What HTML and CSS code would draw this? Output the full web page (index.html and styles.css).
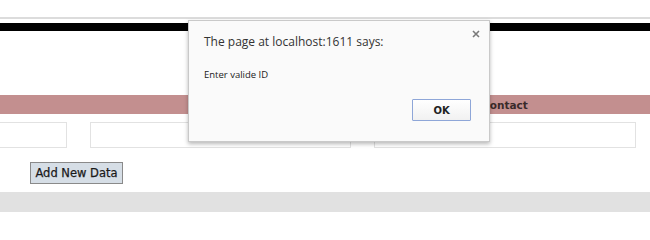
FILE: index.html
```html
<!DOCTYPE html>
<html>
<head>
<meta charset="utf-8">
<link rel="stylesheet" href="styles.css">
</head>
<body>
<div class="page">
  <div class="topline"></div>
  <div class="blackbar"></div>
  <div class="spacer"></div>
  <div class="band">
    <div class="hcell"></div>
    <div class="hcell"></div>
    <div class="hcell">Contact</div>
  </div>
  <div class="inputs">
    <input class="field first" type="text">
    <input class="field" type="text">
    <input class="field" type="text">
  </div>
  <div class="actions">
    <button class="addbtn">Add New Data</button>
  </div>
  <div class="footer"></div>
</div>

<div class="dialog">
  <div class="dlg-title">The page at localhost:1611 says:</div>
  <svg class="dlg-close" width="8" height="8" viewBox="0 0 8 8"><path d="M1 1L7 7M7 1L1 7" stroke="#7a7a7a" stroke-width="1.6"/></svg>
  <div class="dlg-msg">Enter valide ID</div>
  <div class="dlg-actions">
    <button class="okbtn">OK</button>
  </div>
</div>
</body>
</html>
```
FILE: styles.css
```css
html, body {
  margin: 0;
  padding: 0;
  background: #ffffff;
  width: 650px;
  height: 212px;
  overflow: hidden;
}
.page {
  display: flex;
  flex-direction: column;
}
.topline {
  margin-top: 17px;
  height: 2px;
  background: #dcdcdc;
}
.blackbar {
  margin-top: 4px;
  height: 8px;
  background: #000;
}
.spacer {
  height: 64px;
}
.band {
  height: 19px;
  background: #c38f8f;
  display: grid;
  grid-template-columns: 67px 261px 262px;
  column-gap: 23px;
  align-items: center;
}
.hcell {
  font-family: "DejaVu Sans", Verdana, sans-serif;
  font-weight: bold;
  font-size: 10.5px;
  color: #3a2a2a;
  text-align: center;
}
.inputs {
  margin-top: 8px;
  display: grid;
  grid-template-columns: 67px 261px 262px;
  column-gap: 23px;
}
.field {
  box-sizing: border-box;
  height: 26px;
  margin: 0;
  border: 1px solid #e2e2e2;
  background: #fff;
  padding: 0;
}
.field.first {
  border-left: none;
}
.actions {
  padding: 14px 0 8px 30px;
  display: flex;
}
.addbtn {
  box-sizing: border-box;
  width: 93px;
  height: 22px;
  margin: 0;
  padding: 0;
  border: 1px solid #8a8a8a;
  background: #d6dee6;
  font-family: "DejaVu Sans", Verdana, sans-serif;
  font-size: 11.5px;
  color: #1a1a1a;
  -webkit-text-stroke: 0.25px #1a1a1a;
}
.footer {
  height: 20px;
  background: #e1e1e1;
}
.dialog {
  position: absolute;
  left: 188px;
  top: 20px;
  width: 302px;
  height: 122px;
  box-sizing: border-box;
  background: #fafafa;
  border: 1px solid #c9c9c9;
  box-shadow: 0 2px 4px rgba(0,0,0,0.28);
  padding: 12px 18px 0 15px;
  font-family: "Open Sans", "Noto Sans", sans-serif;
}
.dlg-title {
  font-size: 12px;
  color: #333;
  line-height: 18px;
}
.dlg-close {
  position: absolute;
  right: 9px;
  top: 9px;
}
.dlg-msg {
  margin-top: 17px;
  font-size: 9.5px;
  color: #222;
  line-height: 14px;
}
.dlg-actions {
  display: flex;
  justify-content: flex-end;
  margin-top: 17px;
}
.okbtn {
  box-sizing: border-box;
  width: 59px;
  height: 22px;
  margin: 0;
  padding: 0;
  border: 1px solid #8ea6d8;
  border-radius: 1px;
  background: linear-gradient(#ffffff, #f1f1f1);
  font-family: "DejaVu Sans", sans-serif;
  font-weight: bold;
  font-size: 10px;
  color: #222;
}
```
